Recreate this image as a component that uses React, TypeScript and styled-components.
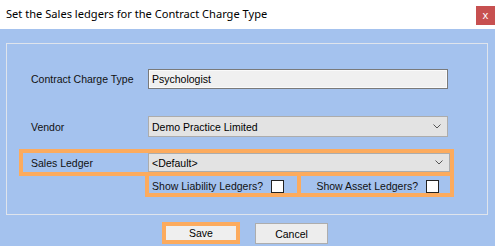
import React from "react";
import styled, { createGlobalStyle } from "styled-components";

const Global = createGlobalStyle`
  html, body { margin: 0; padding: 0; background: #a4c2ee; }
  body { font-family: "Liberation Sans", Arial, sans-serif; }
  * { box-sizing: border-box; }
`;

const Window = styled.div`
  width: 495px;
  height: 246px;
  background: #a4c2ee;
  display: flex;
  flex-direction: column;
  overflow: hidden;
`;

const TitleBar = styled.div`
  height: 29px;
  background: #ffffff;
  display: flex;
  align-items: flex-start;
  justify-content: space-between;
  padding-left: 6px;
`;

const Title = styled.div`
  font-family: "Noto Sans", "Open Sans", sans-serif;
  font-size: 11.1px;
  color: #000;
  line-height: 16px;
  margin-top: 6px;
  white-space: nowrap;
`;

const CloseButton = styled.div`
  width: 19px;
  height: 19px;
  margin-top: 6px;
  background: #c75050;
  color: #fff;
  font-family: "Noto Sans", "Liberation Sans", sans-serif;
  font-size: 11px;
  line-height: 17px;
  text-align: center;
`;

const Body = styled.div`
  padding: 14px 7px 0 6px;
  display: flex;
  flex-direction: column;
`;

const GroupBox = styled.div`
  width: 482px;
  height: 172px;
  border: 1px solid #dfe4ec;
  display: flex;
  flex-direction: column;
  padding: 25px 0 0 12px;
`;

const FieldRow = styled.div<{ $top?: number }>`
  display: flex;
  align-items: center;
  padding-left: 12px;
  margin-top: ${(p) => p.$top ?? 0}px;
`;

const Label = styled.div`
  width: 117px;
  font-size: 10.5px;
  color: #111;
  white-space: nowrap;
`;

const TextBox = styled.div`
  width: 300px;
  height: 20px;
  background: #f0f0f0;
  border: 1px solid #7a7a7a;
  box-shadow: inset 0 0 0 1px #fafafa;
  font-size: 10.5px;
  color: #000;
  display: flex;
  align-items: center;
  padding-left: 3px;
`;

const Combo = styled.div<{ $w: number; $h: number }>`
  width: ${(p) => p.$w}px;
  height: ${(p) => p.$h}px;
  background: #e3e3e3;
  border: 1px solid #acacac;
  font-size: 10.5px;
  color: #000;
  display: flex;
  align-items: center;
  justify-content: space-between;
  padding: 0 6px 0 3px;
`;

const Highlight = styled.div`
  width: 435px;
  height: 27px;
  border: 4px solid #fcab5e;
  display: flex;
  margin-top: 12px;
`;

const HighlightLabel = styled.div`
  width: 125px;
  display: flex;
  align-items: center;
  padding-left: 8px;
  font-size: 10.5px;
  color: #111;
`;

const CheckRow = styled.div`
  width: 309px;
  height: 25px;
  margin-top: -4px;
  margin-left: 126px;
  border: 4px solid #fcab5e;
  display: flex;
`;

const CheckCell = styled.div<{ $w: number; $pr: number }>`
  width: ${(p) => p.$w}px;
  display: flex;
  align-items: center;
  justify-content: flex-end;
  gap: 8px;
  padding-right: ${(p) => p.$pr}px;
  padding-top: 3px;
  font-size: 10.5px;
  color: #111;
  white-space: nowrap;
`;

const Divider = styled.div`
  width: 4px;
  background: #fcab5e;
`;

const CheckBox = styled.div`
  width: 13px;
  height: 13px;
  background: #fff;
  border: 1px solid #222;
`;

const ButtonRow = styled.div`
  display: flex;
  align-items: flex-start;
  margin-top: 7px;
  padding-left: 156px;
`;

const SaveFrame = styled.div`
  width: 78px;
  height: 22px;
  border: 4px solid #fcab5e;
  display: flex;
`;

const SaveFace = styled.div`
  flex: 1;
  background: #efefef;
  font-size: 10.5px;
  color: #000;
  display: flex;
  align-items: center;
  justify-content: center;
`;

const CancelButton = styled.div`
  width: 73px;
  height: 21px;
  margin-top: 1px;
  margin-left: 15px;
  background: #ededed;
  border: 1px solid #adadad;
  font-size: 10.5px;
  color: #000;
  display: flex;
  align-items: center;
  justify-content: center;
`;

const Chevron = () => (
  <svg width="8" height="5" viewBox="0 0 8 5">
    <polyline points="0.5,0.5 4,4 7.5,0.5" fill="none" stroke="#555" strokeWidth="1" />
  </svg>
);

export default function App() {
  return (
    <Window>
      <Global />
      <TitleBar>
        <Title>Set the Sales ledgers for the Contract Charge Type</Title>
        <CloseButton>x</CloseButton>
      </TitleBar>
      <Body>
        <GroupBox>
          <FieldRow>
            <Label>Contract Charge Type</Label>
            <TextBox>Psychologist</TextBox>
          </FieldRow>
          <FieldRow $top={27}>
            <Label>Vendor</Label>
            <Combo $w={300} $h={21}>
              <span>Demo Practice Limited</span>
              <Chevron />
            </Combo>
          </FieldRow>
          <Highlight>
            <HighlightLabel>Sales Ledger</HighlightLabel>
            <Combo $w={302} $h={19}>
              <span>&lt;Default&gt;</span>
              <Chevron />
            </Combo>
          </Highlight>
          <CheckRow>
            <CheckCell $w={148} $pr={13}>
              <span>Show Liability Ledgers?</span>
              <CheckBox />
            </CheckCell>
            <Divider />
            <CheckCell $w={149} $pr={11}>
              <span>Show Asset Ledgers?</span>
              <CheckBox />
            </CheckCell>
          </CheckRow>
        </GroupBox>
        <ButtonRow>
          <SaveFrame>
            <SaveFace>Save</SaveFace>
          </SaveFrame>
          <CancelButton>Cancel</CancelButton>
        </ButtonRow>
      </Body>
    </Window>
  );
}
